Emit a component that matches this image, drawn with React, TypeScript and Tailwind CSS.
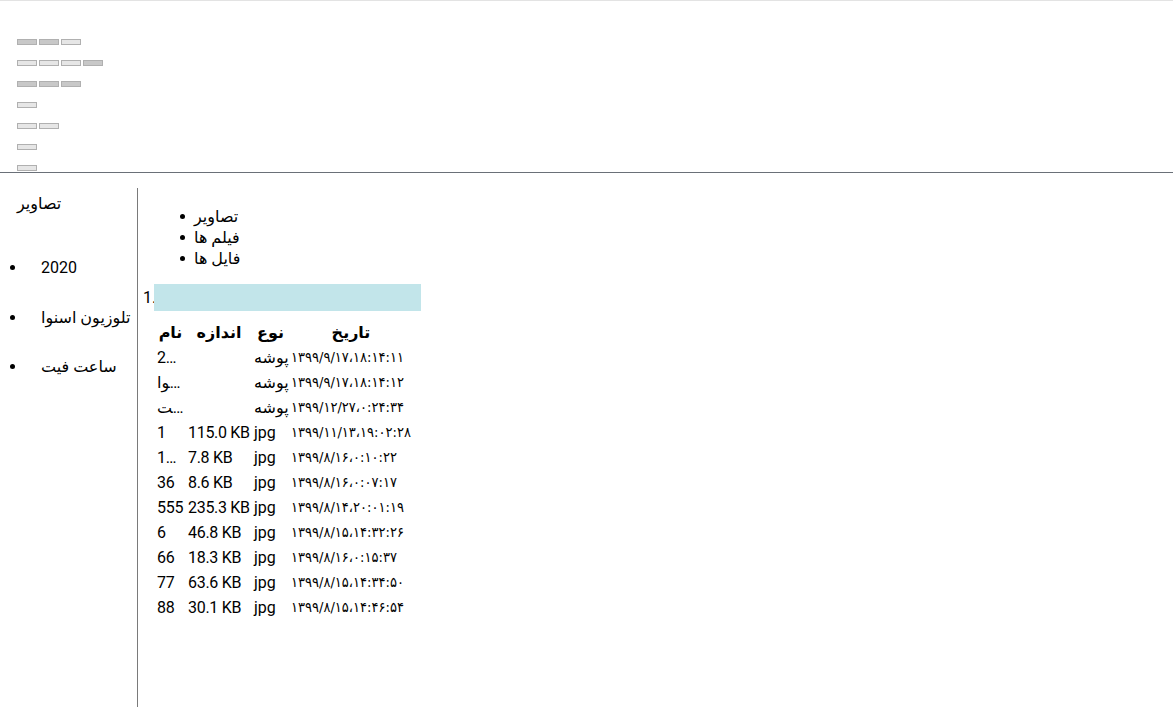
import React from "react";

const boxRows: boolean[][] = [
  [true, true, false],
  [false, false, false, true],
  [true, true, true],
  [false],
  [false, false],
  [false],
  [false],
];

type Row = { name: string; size: string; type: string; date: string };

const rows: Row[] = [
  { name: "2020", size: "", type: "پوشه", date: "۱۳۹۹/۹/۱۷،۱۸:۱۴:۱۱" },
  { name: "تلوزیون اسنوا", size: "", type: "پوشه", date: "۱۳۹۹/۹/۱۷،۱۸:۱۴:۱۲" },
  { name: "ساعت فیت", size: "", type: "پوشه", date: "۱۳۹۹/۱۲/۲۷،۰:۲۴:۳۴" },
  { name: "1", size: "115.0 KB", type: "jpg", date: "۱۳۹۹/۱۱/۱۳،۱۹:۰۲:۲۸" },
  { name: "12345", size: "7.8 KB", type: "jpg", date: "۱۳۹۹/۸/۱۶،۰:۱۰:۲۲" },
  { name: "36", size: "8.6 KB", type: "jpg", date: "۱۳۹۹/۸/۱۶،۰:۰۷:۱۷" },
  { name: "555", size: "235.3 KB", type: "jpg", date: "۱۳۹۹/۸/۱۴،۲۰:۰۱:۱۹" },
  { name: "6", size: "46.8 KB", type: "jpg", date: "۱۳۹۹/۸/۱۵،۱۴:۳۲:۲۶" },
  { name: "66", size: "18.3 KB", type: "jpg", date: "۱۳۹۹/۸/۱۶،۰:۱۵:۳۷" },
  { name: "77", size: "63.6 KB", type: "jpg", date: "۱۳۹۹/۸/۱۵،۱۴:۳۴:۵۰" },
  { name: "88", size: "30.1 KB", type: "jpg", date: "۱۳۹۹/۸/۱۵،۱۴:۴۶:۵۴" },
];

export default function App() {
  return (
    <div className="w-[1173px] h-[707px] overflow-hidden bg-white text-black text-[16px] leading-[21px] font-['Roboto','DejaVu_Sans',sans-serif]">
      {/* top toolbar */}
      <div className="border-t border-[#e3e3e3] border-b border-b-[#6a7078] pl-[17px] pt-[38px] pb-[1px] flex flex-col gap-[15px]">
        {boxRows.map((r, i) => (
          <div key={i} className="flex gap-[2px] h-[6px]">
            {r.map((dark, j) => (
              <div
                key={j}
                className={
                  dark
                    ? "w-[20px] h-[6px] border border-[#b0b0b0] bg-[#c8c8c8]"
                    : "w-[20px] h-[6px] border border-[#b0b0b0] bg-[#e6e6e6]"
                }
              />
            ))}
          </div>
        ))}
      </div>

      {/* body */}
      <div className="flex mt-[15px]">
        <aside className="w-[138px] h-[519px] border-r border-[#7a7a7a] shrink-0">
          <div className="pl-[17px] pt-[5px]">تصاویر</div>
          <div className="mt-[43px] flex flex-col gap-[28.5px]">
            {["2020", "تلوزیون اسنوا", "ساعت فیت"].map((t) => (
              <div key={t} className="flex items-center h-[21px]">
                <span className="ml-[10px] w-[5px] h-[5px] rounded-full bg-black shrink-0" />
                <span className="ml-[26px] whitespace-nowrap">{t}</span>
              </div>
            ))}
          </div>
        </aside>

        <main className="pl-[16px] pt-[18px]">
          <div className="flex flex-col">
            {["تصاویر", "فیلم ها", "فایل ها"].map((t) => (
              <div key={t} className="flex items-center h-[21px]">
                <span className="ml-[26px] w-[5px] h-[5px] rounded-full bg-black shrink-0" />
                <span className="ml-[9px]">{t}</span>
              </div>
            ))}
          </div>

          <div className="flex items-center mt-[15px] -ml-[11px]">
            <span className="w-[11px] leading-[21px]">1.</span>
            <div className="w-[267px] h-[27px] bg-[#c2e5ea]" />
          </div>

          <table className="mt-[8px] table-fixed w-[260px] border-separate border-spacing-[2px] tracking-[-0.3px]">
            <colgroup>
              <col className="w-[29px]" />
              <col className="w-[64px]" />
              <col className="w-[35px]" />
              <col className="w-[122px]" />
            </colgroup>
            <thead>
              <tr>
                <th className="p-px h-[23px] font-bold text-center whitespace-nowrap tracking-normal">نام</th>
                <th className="p-px h-[23px] font-bold text-center whitespace-nowrap tracking-normal">اندازه</th>
                <th className="p-px h-[23px] font-bold text-center whitespace-nowrap tracking-normal">نوع</th>
                <th className="p-px h-[23px] font-bold text-center whitespace-nowrap tracking-normal">تاریخ</th>
              </tr>
            </thead>
            <tbody>
              {rows.map((r, i) => (
                <tr key={i}>
                  <td className="p-px h-[23px]">
                    <div className="w-[27px] overflow-hidden text-ellipsis whitespace-nowrap">{r.name}</div>
                  </td>
                  <td className="p-px h-[23px] whitespace-nowrap">{r.size}</td>
                  <td className="p-px h-[23px] whitespace-nowrap tracking-normal">{r.type}</td>
                  <td className="p-px h-[23px] whitespace-nowrap tracking-normal text-[14.5px] font-['DejaVu_Sans_Condensed','DejaVu_Sans',sans-serif]">
                    {r.date}
                  </td>
                </tr>
              ))}
            </tbody>
          </table>
        </main>
      </div>
    </div>
  );
}
